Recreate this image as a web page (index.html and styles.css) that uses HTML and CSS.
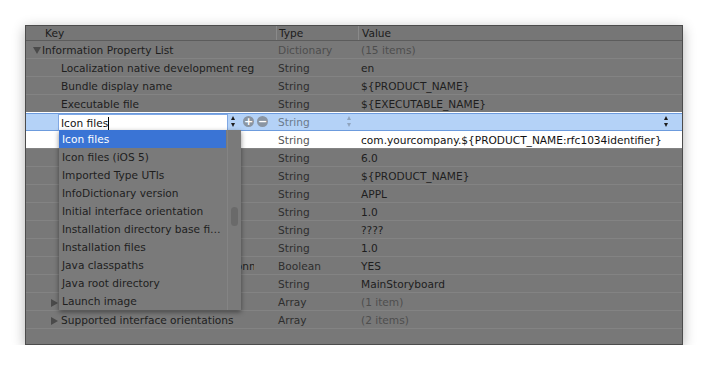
FILE: index.html
```html
<!DOCTYPE html>
<html lang="en">
<head>
    <meta charset="UTF-8">
    <title>Info.plist</title>
    <link rel="stylesheet" href="styles.css">
</head>
<body>
    <div class="window">
        <div class="header">
            <div class="col key">Key</div>
            <div class="col type">Type</div>
            <div class="col value">Value</div>
        </div>

        <div class="row">
            <div class="col key root"><span class="tri open"></span>Information Property List</div>
            <div class="col type muted">Dictionary</div>
            <div class="col value muted">(15 items)</div>
        </div>
        <div class="row">
            <div class="col key">Localization native development region</div>
            <div class="col type">String</div>
            <div class="col value">en</div>
        </div>
        <div class="row">
            <div class="col key">Bundle display name</div>
            <div class="col type">String</div>
            <div class="col value">${PRODUCT_NAME}</div>
        </div>
        <div class="row">
            <div class="col key">Executable file</div>
            <div class="col type">String</div>
            <div class="col value">${EXECUTABLE_NAME}</div>
        </div>

        <!-- row being edited -->
        <div class="row editing">
            <div class="col key">
                <div class="field">Icon files<span class="caret"></span></div>
                <span class="stepper dark"></span>
                <span class="circle">+</span>
                <span class="circle">&minus;</span>
            </div>
            <div class="col type">String<span class="stepper faint"></span></div>
            <div class="col value"><span class="stepper faint"></span><span class="stepper dark end"></span></div>
        </div>
        <div class="row lit">
            <div class="col key">Bundle identifier</div>
            <div class="col type">String</div>
            <div class="col value">com.yourcompany.${PRODUCT_NAME:rfc1034identifier}</div>
        </div>

        <div class="row">
            <div class="col key">InfoDictionary version</div>
            <div class="col type">String</div>
            <div class="col value">6.0</div>
        </div>
        <div class="row">
            <div class="col key">Bundle name</div>
            <div class="col type">String</div>
            <div class="col value">${PRODUCT_NAME}</div>
        </div>
        <div class="row">
            <div class="col key">Bundle OS Type code</div>
            <div class="col type">String</div>
            <div class="col value">APPL</div>
        </div>
        <div class="row">
            <div class="col key">Bundle versions string, short</div>
            <div class="col type">String</div>
            <div class="col value">1.0</div>
        </div>
        <div class="row">
            <div class="col key">Bundle creator OS Type code</div>
            <div class="col type">String</div>
            <div class="col value">????</div>
        </div>
        <div class="row">
            <div class="col key">Bundle version</div>
            <div class="col type">String</div>
            <div class="col value">1.0</div>
        </div>
        <div class="row">
            <div class="col key">Application requires iPhone environment</div>
            <div class="col type">Boolean</div>
            <div class="col value">YES</div>
        </div>
        <div class="row">
            <div class="col key">Main storyboard file base name</div>
            <div class="col type">String</div>
            <div class="col value">MainStoryboard</div>
        </div>
        <div class="row">
            <div class="col key child"><span class="tri"></span>Launch images</div>
            <div class="col type">Array</div>
            <div class="col value muted">(1 item)</div>
        </div>
        <div class="row">
            <div class="col key child"><span class="tri"></span>Supported interface orientations</div>
            <div class="col type">Array</div>
            <div class="col value muted">(2 items)</div>
        </div>
        <div class="row blank"></div>

        <!-- completion list -->
        <div class="popup">
            <ul class="items">
                <li class="selected">Icon files</li>
                <li>Icon files (iOS 5)</li>
                <li>Imported Type UTIs</li>
                <li>InfoDictionary version</li>
                <li>Initial interface orientation</li>
                <li>Installation directory base fi…</li>
                <li>Installation files</li>
                <li>Java classpaths</li>
                <li>Java root directory</li>
                <li>Launch image</li>
            </ul>
            <div class="scroller"><div class="thumb"></div></div>
        </div>
    </div>
</body>
</html>
```

FILE: styles.css
```css
body {
    margin: 0;
    background-color: #fff;
    font-family: "DejaVu Sans", "Liberation Sans", sans-serif;
    font-size: 10.6px;
    color: #1e1e1e;
}
.window {
    position: relative;
    margin: 25px 0 0 25px;
    width: 656px;
    height: 318px;
    border: 1px solid #4c4c4c;
    background-color: #787878;
    box-shadow: 0 3px 12px rgba(0, 0, 0, 0.3);
    overflow: hidden;
}
.header {
    display: flex;
    height: 14px;
    line-height: 15px;
    border-bottom: 1px solid #5c5c5c;
    background-color: #767676;
}
.header .col {
    color: #1c1c1c;
}
.header .type,
.header .value {
    border-left: 1px solid #8a8a8a;
}
.header .key {
    padding-left: 19px;
    clip-path: none;
}
.row {
    display: flex;
    height: 17px;
    line-height: 18px;
    border-bottom: 1px solid #838383;
}
.col {
    white-space: nowrap;
    overflow: hidden;
    box-sizing: border-box;
}
.key {
    width: 250px;
    padding-left: 35px;
    clip-path: inset(0 22px 0 0);
}
.type {
    width: 82px;
    padding-left: 2px;
    color: #262626;
}
.value {
    flex: 1;
    padding-left: 3px;
}
.row .type {
    color: #2e2e2e;
}
.row .muted {
    color: #4e4e4e;
}
.key.root {
    padding-left: 7px;
}
.key.child {
    padding-left: 25px;
}
.tri {
    display: inline-block;
    width: 0;
    height: 0;
    margin-right: 3px;
    border-top: 4px solid transparent;
    border-bottom: 4px solid transparent;
    border-left: 7px solid #4a4a4a;
    vertical-align: -1px;
}
.tri.open {
    border-left: 4px solid transparent;
    border-right: 4px solid transparent;
    border-top: 7px solid #4a4a4a;
    border-bottom: 0;
    margin-right: 1px;
    vertical-align: 0;
}

/* edited row */
.row.editing {
    background-color: #b4d2f7;
    border-top: 1px solid #fff;
    border-bottom: 1px solid #6c9bdd;
    margin-top: -1px;
    height: 17px;
    box-shadow: inset 0 1px 0 #6c9bdd;
}
.row.editing .key {
    display: flex;
    align-items: center;
    padding-left: 33px;
    overflow: visible;
    clip-path: none;
}
.field {
    width: 166px;
    height: 15px;
    line-height: 16px;
    margin-top: 1px;
    padding-left: 2px;
    background-color: #fff;
    color: #111;
    box-shadow: 0 0 0 1px #7fa7e3;
}
.caret {
    display: inline-block;
    width: 1px;
    height: 13px;
    background-color: #000;
    vertical-align: -3px;
}
.row.editing .type {
    position: relative;
    color: #6b7a8c;
}
.row.editing .value {
    position: relative;
}
.stepper {
    display: inline-block;
    position: relative;
    width: 5px;
    height: 11px;
}
.stepper::before,
.stepper::after {
    content: "";
    position: absolute;
    left: 0;
    border-left: 2.5px solid transparent;
    border-right: 2.5px solid transparent;
}
.stepper::before {
    top: 0;
    border-bottom: 4px solid currentColor;
}
.stepper::after {
    bottom: 0;
    border-top: 4px solid currentColor;
}
.stepper.dark {
    color: #1d1d1d;
    margin-left: 4px;
}
.stepper.faint {
    color: #8ea4be;
    position: absolute;
    top: 3px;
    right: 6px;
}
.row.editing .value .stepper.faint {
    left: -15px;
}
.stepper.end {
    position: absolute;
    top: 3px;
    right: 13px;
}
.circle {
    display: inline-block;
    width: 11px;
    height: 11px;
    margin-left: 3px;
    border-radius: 50%;
    background-color: #8a95a2;
    color: #fff;
    font-family: "DejaVu Sans", sans-serif;
    font-weight: bold;
    font-size: 11px;
    line-height: 11px;
    text-align: center;
}
.circle + .circle {
    margin-left: 3px;
}
.stepper.dark + .circle {
    margin-left: 7px;
}
.row.lit {
    background-color: #fff;
}
.row.lit .type {
    color: #555;
}
.row.lit .value {
    color: #111;
}
.row.blank {
    border-bottom: 0;
}

/* completion popup */
.popup {
    position: absolute;
    left: 33px;
    top: 104px;
    width: 182px;
    height: 180px;
    display: flex;
    background-color: #7a7a7a;
    box-shadow: 0 2px 5px rgba(0, 0, 0, 0.45);
}
.items {
    list-style: none;
    margin: 0;
    padding: 0;
    width: 168px;
}
.items li {
    height: 18px;
    line-height: 18px;
    padding-left: 3px;
    white-space: nowrap;
    overflow: hidden;
    color: #1e1e1e;
}
.items li.selected {
    background-color: #3a74d5;
    color: #fff;
    margin-right: 1px;
}
.scroller {
    flex: 1;
    position: relative;
    border-left: 1px solid #848484;
}
.thumb {
    position: absolute;
    left: 3px;
    top: 77px;
    width: 7px;
    height: 19px;
    border-radius: 4px;
    background-color: #6a6a6a;
}
```
